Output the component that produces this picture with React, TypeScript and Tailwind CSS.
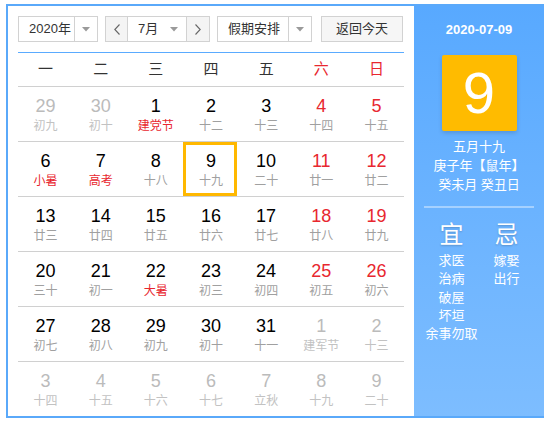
import { Fragment } from 'react';

type Day = { d: number; l: string; other?: boolean; red?: boolean; lred?: boolean; sel?: boolean };

const weeks: Day[][] = [
  [
    { d: 29, l: '初九', other: true },
    { d: 30, l: '初十', other: true },
    { d: 1, l: '建党节', lred: true },
    { d: 2, l: '十二' },
    { d: 3, l: '十三' },
    { d: 4, l: '十四', red: true },
    { d: 5, l: '十五', red: true },
  ],
  [
    { d: 6, l: '小暑', lred: true },
    { d: 7, l: '高考', lred: true },
    { d: 8, l: '十八' },
    { d: 9, l: '十九', sel: true },
    { d: 10, l: '二十' },
    { d: 11, l: '廿一', red: true },
    { d: 12, l: '廿二', red: true },
  ],
  [
    { d: 13, l: '廿三' },
    { d: 14, l: '廿四' },
    { d: 15, l: '廿五' },
    { d: 16, l: '廿六' },
    { d: 17, l: '廿七' },
    { d: 18, l: '廿八', red: true },
    { d: 19, l: '廿九', red: true },
  ],
  [
    { d: 20, l: '三十' },
    { d: 21, l: '初一' },
    { d: 22, l: '大暑', lred: true },
    { d: 23, l: '初三' },
    { d: 24, l: '初四' },
    { d: 25, l: '初五', red: true },
    { d: 26, l: '初六', red: true },
  ],
  [
    { d: 27, l: '初七' },
    { d: 28, l: '初八' },
    { d: 29, l: '初九' },
    { d: 30, l: '初十' },
    { d: 31, l: '十一' },
    { d: 1, l: '建军节', other: true },
    { d: 2, l: '十三', other: true },
  ],
  [
    { d: 3, l: '十四', other: true },
    { d: 4, l: '十五', other: true },
    { d: 5, l: '十六', other: true },
    { d: 6, l: '十七', other: true },
    { d: 7, l: '立秋', other: true },
    { d: 8, l: '十九', other: true },
    { d: 9, l: '二十', other: true },
  ],
];

const weekdays = ['一', '二', '三', '四', '五', '六', '日'];

function Caret() {
  return (
    <svg width="8" height="5" viewBox="0 0 8 5">
      <path d="M0 0 L8 0 L4 4.5 Z" fill="#9a9a9a" />
    </svg>
  );
}

function Chevron({ dir }: { dir: 'l' | 'r' }) {
  return (
    <svg width="6" height="11" viewBox="0 0 6 11">
      <path d={dir === 'l' ? 'M5.5 0.5 L0.8 5.5 L5.5 10.5' : 'M0.5 0.5 L5.2 5.5 L0.5 10.5'} fill="none" stroke="#666" strokeWidth="1.1" />
    </svg>
  );
}

function Select({ label, width, textW }: { label: string; width: string; textW: string }) {
  return (
    <div className={`flex h-[26px] ${width} border border-[#d2d2d2] bg-white`}>
      <div className={`${textW} flex items-center pl-[10px] text-[13px] text-[#333]`}>{label}</div>
      <div className="flex flex-1 items-center justify-center border-l border-[#d2d2d2]">
        <Caret />
      </div>
    </div>
  );
}

export default function App() {
  return (
    <div
      className="ml-[6px] mt-[4px] flex h-[414px] w-[538px] border-y-2 border-l-2 border-[#5aa9fa] bg-white"
      style={{ fontFamily: '"Liberation Sans", Arial, "Noto Sans CJK SC", sans-serif' }}
    >
      <div className="w-[406px] px-[10px] pt-[10px]">
        <div className="flex h-[26px] items-center">
          <Select label="2020年" width="w-[80px]" textW="w-[55px]" />
          <div className="ml-[7px] flex h-[26px] w-[105px] border border-[#d2d2d2]">
            <div className="flex w-[21px] items-center justify-center bg-[#f4f4f4]">
              <Chevron dir="l" />
            </div>
            <div className="flex w-[60px] border-x border-[#d2d2d2] bg-white">
              <div className="flex flex-1 items-center pl-[10px] text-[13px] text-[#333]">7月</div>
              <div className="flex w-[24px] items-center justify-center">
                <Caret />
              </div>
            </div>
            <div className="flex flex-1 items-center justify-center bg-[#f4f4f4]">
              <Chevron dir="r" />
            </div>
          </div>
          <div className="ml-[7px]">
            <Select label="假期安排" width="w-[95px]" textW="w-[70px]" />
          </div>
          <div className="ml-[9px] flex h-[26px] w-[82px] items-center justify-center border border-[#d2d2d2] bg-[#f6f6f6] text-[13px] text-[#333]">
            返回今天
          </div>
        </div>

        <div className="mt-[10px] h-px bg-[#5aabff]" />
        <div className="grid h-[33px] grid-cols-7 items-center text-center text-[15px]">
          {weekdays.map((w, i) => (
            <div key={w} className={i >= 5 ? 'text-[#e8272f]' : 'text-[#333]'}>
              {w}
            </div>
          ))}
        </div>

        {weeks.map((week, wi) => (
          <div key={wi} className="grid h-[55px] grid-cols-7 border-t border-[#d0d0d0]">
            {week.map((day, di) => {
              const numColor = day.other ? 'text-[#bbbbbb]' : day.red ? 'text-[#e8272f]' : 'text-[#000]';
              const lunarColor = day.other ? 'text-[#c2c2c2]' : day.lred ? 'text-[#e8272f]' : 'text-[#a0a0a0]';
              return (
                <Fragment key={di}>
                  <div className="relative flex flex-col items-center pt-[9px]">
                    {day.sel && <div className="absolute left-0 top-0 h-[54px] w-[54px] border-[3px] border-[#ffb800]" />}
                    <div className={`text-[18px] leading-[20px] ${numColor}`}>{day.d}</div>
                    <div className={`mt-[2px] text-[12px] leading-[16px] ${lunarColor}`}>{day.l}</div>
                  </div>
                </Fragment>
              );
            })}
          </div>
        ))}
      </div>

      <div className="flex w-[130px] flex-col items-center bg-gradient-to-b from-[#58a9ff] to-[#7dbdff] pt-[14px] text-white">
        <div className="text-[13px] font-semibold leading-[20px]">2020-07-09</div>
        <div className="mt-[15px] flex h-[76px] w-[75px] items-center justify-center rounded-[2px] bg-[#ffbb00] text-[58px] leading-none shadow-[0_2px_4px_rgba(0,0,0,0.15)]">
          9
        </div>
        <div className="mt-[6px] text-center text-[13px] leading-[19px]">
          <div>五月十九</div>
          <div>庚子年【鼠年】</div>
          <div>癸未月 癸丑日</div>
        </div>
        <div className="mt-[12px] h-[2px] w-[110px] bg-white/40" />
        <div className="mt-[13px] grid w-[110px] grid-cols-2 text-center">
          <div className="flex flex-col items-center">
            <div className="text-[24px] leading-[28px] [text-shadow:0_1px_2px_rgba(0,0,0,0.2)]">宜</div>
            <div className="mt-[3px] text-[13px] leading-[18.3px]">
              <div>求医</div>
              <div>治病</div>
              <div>破屋</div>
              <div>坏垣</div>
              <div>余事勿取</div>
            </div>
          </div>
          <div className="flex flex-col items-center">
            <div className="text-[24px] leading-[28px] [text-shadow:0_1px_2px_rgba(0,0,0,0.2)]">忌</div>
            <div className="mt-[3px] text-[13px] leading-[18.3px]">
              <div>嫁娶</div>
              <div>出行</div>
            </div>
          </div>
        </div>
      </div>
    </div>
  );
}
